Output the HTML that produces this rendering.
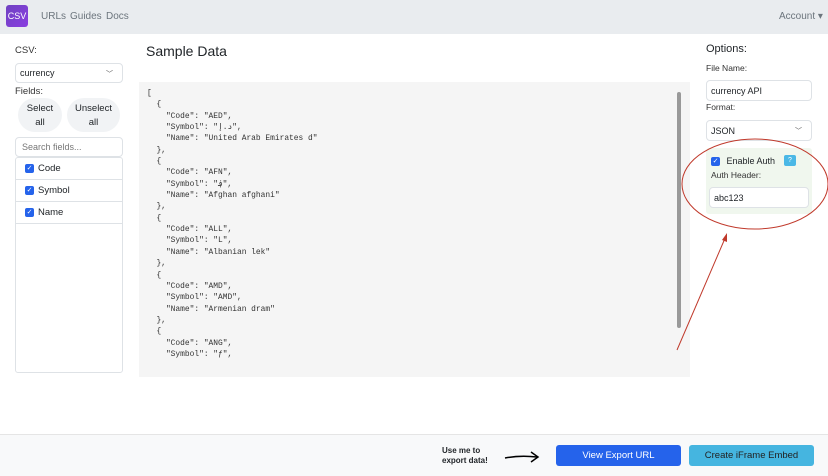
<!DOCTYPE html>
<html><head><style>
*{box-sizing:border-box;margin:0;padding:0}
body{width:828px;height:476px;overflow:hidden;font-family:"Liberation Sans",sans-serif;background:#fff;position:relative;color:#212529}
.nav{position:absolute;left:0;top:0;width:828px;height:34px;background:#e9ecef}
.logo{position:absolute;left:6px;top:5px;width:22px;height:22px;border-radius:3px;background:linear-gradient(135deg,#6f42c1,#8a3ee0);color:#fff;font-size:9px;line-height:22px;text-align:center}
.nl{position:absolute;top:11px;font-size:10px;color:#6c757d}
.a{position:absolute}
.lbl{font-size:9.5px;color:#333}
.box{position:absolute;border:1px solid #dee2e6;border-radius:4px;background:#fff;font-size:9px;padding-left:4px;display:flex;align-items:center}
.chev{position:absolute;right:9px;top:5px;font-size:7px;color:#555}
.btn{position:absolute;border-radius:17px;background:#f1f3f5;font-size:9.5px;text-align:center;line-height:14px;padding-top:4px}
.item{height:22px;border-bottom:1px solid #dee2e6;font-size:9.5px;display:flex;align-items:center;padding-left:9px}
.cb{width:9px;height:9px;background:#2563eb;border-radius:2px;margin-right:4px;color:#fff;font-size:7px;line-height:9px;text-align:center}
pre{font-family:"Liberation Mono",monospace;font-size:7.9px;line-height:11.35px;color:#333}
</style></head><body>
<div class="nav">
<div class="logo">CSV</div>
<div class="nl" style="left:41px">URLs</div>
<div class="nl" style="left:70px">Guides</div>
<div class="nl" style="left:106px">Docs</div>
<div class="nl" style="left:779px">Account ▾</div>
</div>
<div class="a lbl" style="left:15px;top:45px">CSV:</div>
<div class="box" style="left:15px;top:63px;width:108px;height:20px">currency<span class="chev">﹀</span></div>
<div class="a lbl" style="left:15px;top:86px">Fields:</div>
<div class="btn" style="left:18px;top:98px;width:44px;height:34px">Select<br>all</div>
<div class="btn" style="left:67px;top:98px;width:53px;height:34px">Unselect<br>all</div>
<div class="box" style="left:15px;top:137px;width:108px;height:20px;color:#777;padding-left:6px">Search fields...</div>
<div class="a" style="left:15px;top:157px;width:108px;height:216px;border:1px solid #dee2e6;border-radius:3px">
<div class="item"><div class="cb">✓</div>Code</div>
<div class="item"><div class="cb">✓</div>Symbol</div>
<div class="item"><div class="cb">✓</div>Name</div>
</div>
<div class="a" style="left:146px;top:43px;font-size:14px">Sample Data</div>
<div class="a" style="left:139px;top:82px;width:551px;height:295px;background:#f5f5f5;padding:6px 0 0 8px">
<pre>[
  {
    "Code": "AED",
    "Symbol": "د.إ",
    "Name": "United Arab Emirates d"
  },
  {
    "Code": "AFN",
    "Symbol": "؋",
    "Name": "Afghan afghani"
  },
  {
    "Code": "ALL",
    "Symbol": "L",
    "Name": "Albanian lek"
  },
  {
    "Code": "AMD",
    "Symbol": "AMD",
    "Name": "Armenian dram"
  },
  {
    "Code": "ANG",
    "Symbol": "ƒ",</pre>
<div class="a" style="left:538px;top:10px;width:4px;height:236px;background:#999;border-radius:2px"></div>
</div>
<div class="a" style="left:706px;top:43px;font-size:11px">Options:</div>
<div class="a lbl" style="left:706px;top:63px;font-size:8.5px">File Name:</div>
<div class="box" style="left:706px;top:80px;width:106px;height:21px">currency API</div>
<div class="a lbl" style="left:706px;top:102px;font-size:8.5px">Format:</div>
<div class="box" style="left:706px;top:120px;width:106px;height:21px">JSON<span class="chev">﹀</span></div>
<div class="a" style="left:706px;top:148px;width:106px;height:66px;background:#f0f7ee;border-radius:3px"></div>
<div class="a" style="left:711px;top:156px;display:flex;align-items:center;font-size:9px"><div class="cb">✓</div>&nbsp;Enable Auth</div>
<div class="a" style="left:784px;top:155px;width:12px;height:11px;background:#4ab8e6;border-radius:2px;color:#fff;font-size:7px;text-align:center;line-height:11px">?</div>
<div class="a lbl" style="left:711px;top:170px;font-size:8.5px">Auth Header:</div>
<div class="box" style="left:709px;top:187px;width:100px;height:21px">abc123</div>
<svg class="a" style="left:0;top:0" width="828" height="476">
<ellipse cx="755" cy="184" rx="73" ry="45" fill="none" stroke="#c0392b" stroke-width="1"/>
<line x1="677" y1="350" x2="726" y2="236" stroke="#c0392b" stroke-width="1"/>
<path d="M722 240 L727 233 L727 242" fill="#c0392b"/>
</svg>
<div class="a" style="left:0;top:434px;width:828px;height:42px;background:#f8f9fa;border-top:1px solid #e5e5e5"></div>
<div class="a" style="left:442px;top:446px;font-size:8px;font-weight:bold;line-height:10px">Use me to<br>export data!</div>
<svg class="a" style="left:504px;top:450px" width="36" height="14"><path d="M1 8 Q16 5 33 7" stroke="#000" stroke-width="1.5" fill="none"/><path d="M27 2 L34 7 L27 12" stroke="#000" stroke-width="1.5" fill="none"/></svg>
<div class="a" style="left:556px;top:445px;width:125px;height:21px;background:#2563eb;border-radius:3px;color:#fff;font-size:9.5px;text-align:center;line-height:21px">View Export URL</div>
<div class="a" style="left:689px;top:445px;width:125px;height:21px;background:#45b5e0;border-radius:3px;color:#222;font-size:9.5px;text-align:center;line-height:21px">Create iFrame Embed</div>
</body></html>
